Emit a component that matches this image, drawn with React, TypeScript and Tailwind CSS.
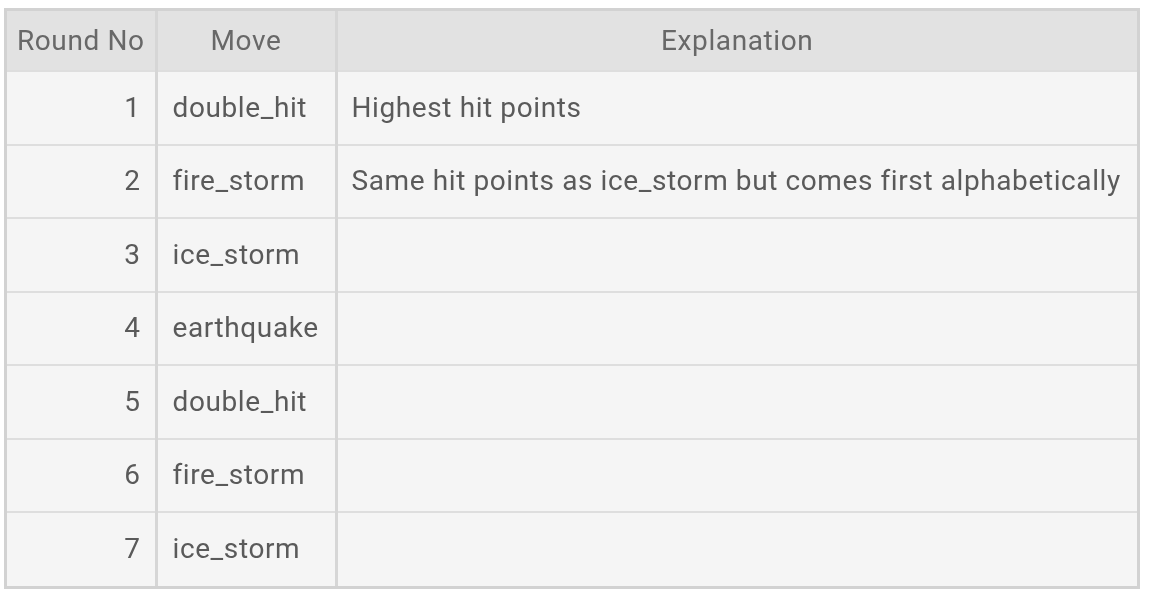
import React from "react";

const rows: [number, string, string][] = [
  [1, "double_hit", "Highest hit points"],
  [2, "fire_storm", "Same hit points as ice_storm but comes first alphabetically"],
  [3, "ice_storm", ""],
  [4, "earthquake", ""],
  [5, "double_hit", ""],
  [6, "fire_storm", ""],
  [7, "ice_storm", ""],
];

export default function App() {
  return (
    <div className="w-[1150px] h-[596px] bg-white pt-[8px] pl-[4px]">
      <div
        className="w-[1136px] border-[3px] border-[#d2d2d2] bg-[#f5f5f5] text-[#5a5a5a] text-[28px] tracking-[0.6px] blur-[0.4px]"
        style={{ fontFamily: "Roboto, 'Liberation Sans', sans-serif" }}
      >
        <table className="w-full table-fixed border-collapse">
          <colgroup>
            <col className="w-[149px]" />
            <col className="w-[180px]" />
            <col />
          </colgroup>
          <thead>
            <tr className="h-[60px] bg-[#e2e2e2] text-[#686868]">
              <th className="font-normal text-center whitespace-nowrap">Round No</th>
              <th className="font-normal text-center border-l-[3px] border-[#d6d6d6]">Move</th>
              <th className="font-normal text-center border-l-[3px] border-[#d6d6d6]">Explanation</th>
            </tr>
          </thead>
          <tbody>
            {rows.map(([n, move, exp]) => (
              <tr key={n} className="h-[73.5px] border-t-2 border-[#dedede]">
                <td className="text-right pr-[14px]">{n}</td>
                <td className="pl-[15px] border-l-[3px] border-[#d6d6d6] whitespace-nowrap">{move}</td>
                <td className="pl-[14px] border-l-[3px] border-[#d6d6d6] whitespace-nowrap">{exp}</td>
              </tr>
            ))}
          </tbody>
        </table>
      </div>
    </div>
  );
}
